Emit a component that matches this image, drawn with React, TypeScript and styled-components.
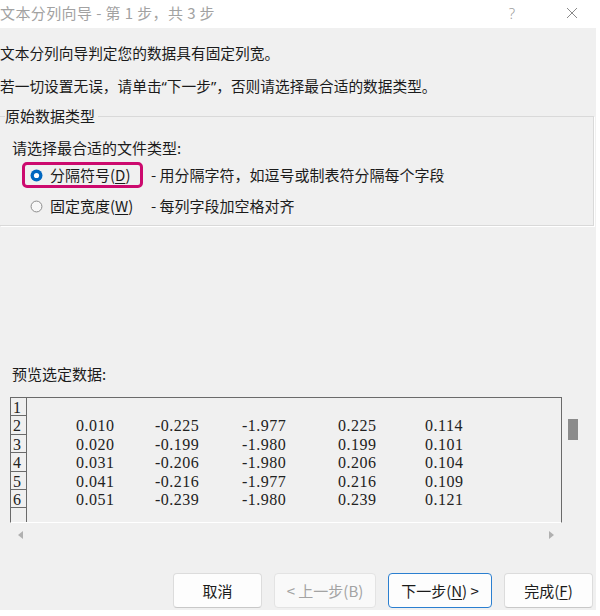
import React from "react";
import styled, { createGlobalStyle } from "styled-components";

const GlobalStyle = createGlobalStyle`
  html, body {
    margin: 0;
    padding: 0;
    background: #ffffff;
  }
  body {
    font-family: "Noto Sans CJK SC", "Noto Sans", sans-serif;
    color: #1b1b1b;
  }
`;

const Window = styled.div`
  width: 600px;
  height: 616px;
  display: flex;
  flex-direction: column;
  background: #ffffff;
`;

const TitleBar = styled.div`
  height: 28px;
  display: flex;
  align-items: center;
  justify-content: space-between;
  background: #ffffff;
`;

const Title = styled.div`
  font-size: 15px;
  line-height: 20px;
  color: #a2a2a2;
  margin-top: -2px;
  letter-spacing: 0.4px;
`;

const TitleButtons = styled.div`
  display: flex;
  align-items: center;
  margin-top: -3px;
`;

const HelpGlyph = styled.span`
  width: 14px;
  font-size: 15px;
  font-family: "Noto Sans", sans-serif;
  font-weight: 300;
  color: #a0a0a0;
  text-align: center;
  margin-right: 47px;
`;

const CloseGlyph = styled.svg`
  width: 12px;
  height: 12px;
  margin-right: 22px;
`;

/* dialog body (grey area) */
const Body = styled.div`
  width: 596px;
  height: 582px;
  background: #f0f0f0;
  display: flex;
  flex-direction: column;
  box-sizing: border-box;
  padding-top: 15px;
`;

const Intro = styled.div<{ $gap?: number }>`
  font-size: 14.7px;
  line-height: 20px;
  white-space: nowrap;
  margin-top: ${(p) => p.$gap ?? 0}px;
`;

/* narrow latin quotes, as the dialog font draws them */
const Quote = styled.span`
  font-family: "Noto Sans", sans-serif;
`;

const GroupBox = styled.fieldset`
  margin: 10px 0 0 0;
  width: 594px;
  box-sizing: border-box;
  padding: 0 0 6px 5px;
  border: 1px solid #d9d9d9;
  border-left: none;
  box-shadow: 1px 1px 0 #ffffff;
  min-width: 0;
`;

const Legend = styled.legend`
  font-size: 15px;
  line-height: 20px;
  padding: 0 3px 0 0;
  color: #1b1b1b;
`;

const Prompt = styled.div`
  margin: 12px 0 0 7px;
  font-size: 15px;
  line-height: 20px;
`;

const OptionRow = styled.div<{ $gap: number }>`
  display: flex;
  align-items: center;
  margin: ${(p) => p.$gap}px 0 0 17px;
  height: 26px;
`;

const Choice = styled.div<{ $marked?: boolean }>`
  width: 121px;
  height: 26px;
  box-sizing: border-box;
  display: flex;
  align-items: center;
  gap: 7px;
  padding-left: 5px;
  border: 3px solid ${(p) => (p.$marked ? "#cc0a6e" : "transparent")};
  border-radius: 5px;
  white-space: nowrap;
`;

const RadioDot = styled.svg`
  width: 13px;
  height: 13px;
  flex: none;
`;

const OptionText = styled.span`
  font-size: 15px;
  line-height: 20px;
  u {
    text-underline-offset: 2px;
  }
`;

const OptionDesc = styled.span`
  margin-left: 8px;
  font-size: 15px;
  line-height: 20px;
  white-space: nowrap;
`;

const PreviewLabel = styled.div`
  margin: 138px 0 0 12px;
  font-size: 15px;
  line-height: 20px;
`;

const PreviewArea = styled.div`
  display: flex;
  margin-top: 13px;
  padding-left: 10px;
`;

const Table = styled.div`
  width: 552px;
  height: 126px;
  box-sizing: border-box;
  display: flex;
  border-top: 1px solid #6a6a6a;
  border-left: 1px solid #6a6a6a;
  border-right: 1px solid #6a6a6a;
  border-bottom: 1px solid #ffffff;
  background: #f0f0f0;
  font-family: "Liberation Serif", "DejaVu Serif", serif;
  font-size: 16px;
  color: #222222;
`;

const NumberColumn = styled.div`
  width: 16px;
  flex: none;
  border-right: 1px solid #6a6a6a;
  box-sizing: border-box;
`;

const NumberCell = styled.div`
  height: 18.4px;
  box-sizing: border-box;
  padding: 2px 0 0 2px;
  line-height: 15.4px;
  border-bottom: 1px solid #6a6a6a;
`;

const DataColumn = styled.div`
  flex: 1;
  display: flex;
  flex-direction: column;
`;

const DataRow = styled.div`
  height: 18.4px;
  box-sizing: border-box;
  padding-top: 2px;
  line-height: 15.4px;
  display: grid;
  grid-template-columns: 49px 79px 87px 96px 87px 1fr;
  letter-spacing: 0.5px;
  white-space: pre;
`;

const VScroll = styled.div`
  width: 34px;
  display: flex;
  justify-content: flex-start;
  padding-left: 6px;
  box-sizing: border-box;
`;

const Thumb = styled.div`
  width: 10px;
  height: 21px;
  margin-top: 22px;
  background: #8b8b8b;
`;

const HScroll = styled.div`
  width: 552px;
  height: 24px;
  margin-left: 10px;
  padding: 0 8px;
  box-sizing: border-box;
  display: flex;
  align-items: center;
  justify-content: space-between;
`;

const Arrow = styled.svg`
  width: 6px;
  height: 8px;
`;

const ButtonBar = styled.div`
  margin-top: auto;
  display: flex;
  justify-content: flex-end;
  gap: 12px;
  padding: 0 3px 2px 0;
`;

const Button = styled.button<{ $width: number; $variant?: "primary" | "disabled" }>`
  width: ${(p) => p.$width}px;
  height: 35px;
  box-sizing: border-box;
  border-radius: 4px;
  background: ${(p) => (p.$variant === "disabled" ? "#f9f9f9" : "#fdfdfd")};
  border: 1px solid
    ${(p) =>
      p.$variant === "primary" ? "#2b7fd0" : p.$variant === "disabled" ? "#e3e3e3" : "#dcdcdc"};
  border-bottom-color: ${(p) =>
    p.$variant === "primary" ? "#2b7fd0" : p.$variant === "disabled" ? "#e3e3e3" : "#c8c8c8"};
  color: ${(p) => (p.$variant === "disabled" ? "#a3a3a3" : "#1b1b1b")};
  font-family: "Noto Sans CJK SC", "Noto Sans", sans-serif;
  font-size: 15px;
  line-height: 20px;
  padding: 0;
  white-space: nowrap;
  u {
    text-underline-offset: 2px;
  }
`;

const rows: string[][] = [
  [],
  ["0.010", "-0.225", "-1.977", "0.225", "0.114"],
  ["0.020", "-0.199", "-1.980", "0.199", "0.101"],
  ["0.031", "-0.206", "-1.980", "0.206", "0.104"],
  ["0.041", "-0.216", "-1.977", "0.216", "0.109"],
  ["0.051", "-0.239", "-1.980", "0.239", "0.121"],
];

const Radio: React.FC<{ checked?: boolean }> = ({ checked }) => (
  <RadioDot viewBox="0 0 12 12">
    {checked ? (
      <>
        <circle cx="6" cy="6" r="5.5" fill="#0067c0" />
        <circle cx="6" cy="6" r="2.4" fill="#ffffff" />
      </>
    ) : (
      <circle cx="6" cy="6" r="5" fill="#f7f7f7" stroke="#8a8a8a" strokeWidth="0.9" />
    )}
  </RadioDot>
);

const App: React.FC = () => {
  return (
    <Window>
      <GlobalStyle />
      <TitleBar>
        <Title>文本分列向导 - 第 1 步，共 3 步</Title>
        <TitleButtons>
          <HelpGlyph>?</HelpGlyph>
          <CloseGlyph viewBox="0 0 12 12">
            <path d="M1 1 L11 11 M11 1 L1 11" stroke="#8a8a8a" strokeWidth="1" fill="none" />
          </CloseGlyph>
        </TitleButtons>
      </TitleBar>

      <Body>
        <Intro>文本分列向导判定您的数据具有固定列宽。</Intro>
        <Intro $gap={13}>
          若一切设置无误，请单击<Quote>“</Quote>下一步<Quote>”</Quote>，否则请选择最合适的数据类型。
        </Intro>

        {/* 原始数据类型 */}
        <GroupBox>
          <Legend>原始数据类型</Legend>
          <Prompt>请选择最合适的文件类型:</Prompt>
          <OptionRow $gap={4}>
            <Choice $marked>
              <Radio checked />
              <OptionText>
                分隔符号(<u>D</u>)
              </OptionText>
            </Choice>
            <OptionDesc>- 用分隔字符，如逗号或制表符分隔每个字段</OptionDesc>
          </OptionRow>
          <OptionRow $gap={5}>
            <Choice>
              <Radio />
              <OptionText>
                固定宽度(<u>W</u>)
              </OptionText>
            </Choice>
            <OptionDesc>- 每列字段加空格对齐</OptionDesc>
          </OptionRow>
        </GroupBox>

        <PreviewLabel>预览选定数据:</PreviewLabel>
        <PreviewArea>
          <Table>
            <NumberColumn>
              {rows.map((_, i) => (
                <NumberCell key={i}>{i + 1}</NumberCell>
              ))}
            </NumberColumn>
            <DataColumn>
              {rows.map((r, i) => (
                <DataRow key={i}>
                  <span />
                  {r.map((v, j) => (
                    <span key={j}>{v}</span>
                  ))}
                </DataRow>
              ))}
            </DataColumn>
          </Table>
          <VScroll>
            <Thumb />
          </VScroll>
        </PreviewArea>
        <HScroll>
          <Arrow viewBox="0 0 6 8">
            <path d="M5 0 L5 8 L0 4 Z" fill="#b0b0b0" />
          </Arrow>
          <Arrow viewBox="0 0 6 8">
            <path d="M1 0 L1 8 L6 4 Z" fill="#b0b0b0" />
          </Arrow>
        </HScroll>

        <ButtonBar>
          <Button $width={89}>取消</Button>
          <Button $width={102} $variant="disabled">
            &lt; 上一步(B)
          </Button>
          <Button $width={104} $variant="primary">
            下一步(<u>N</u>) &gt;
          </Button>
          <Button $width={89}>
            完成(<u>F</u>)
          </Button>
        </ButtonBar>
      </Body>
    </Window>
  );
};

export default App;
